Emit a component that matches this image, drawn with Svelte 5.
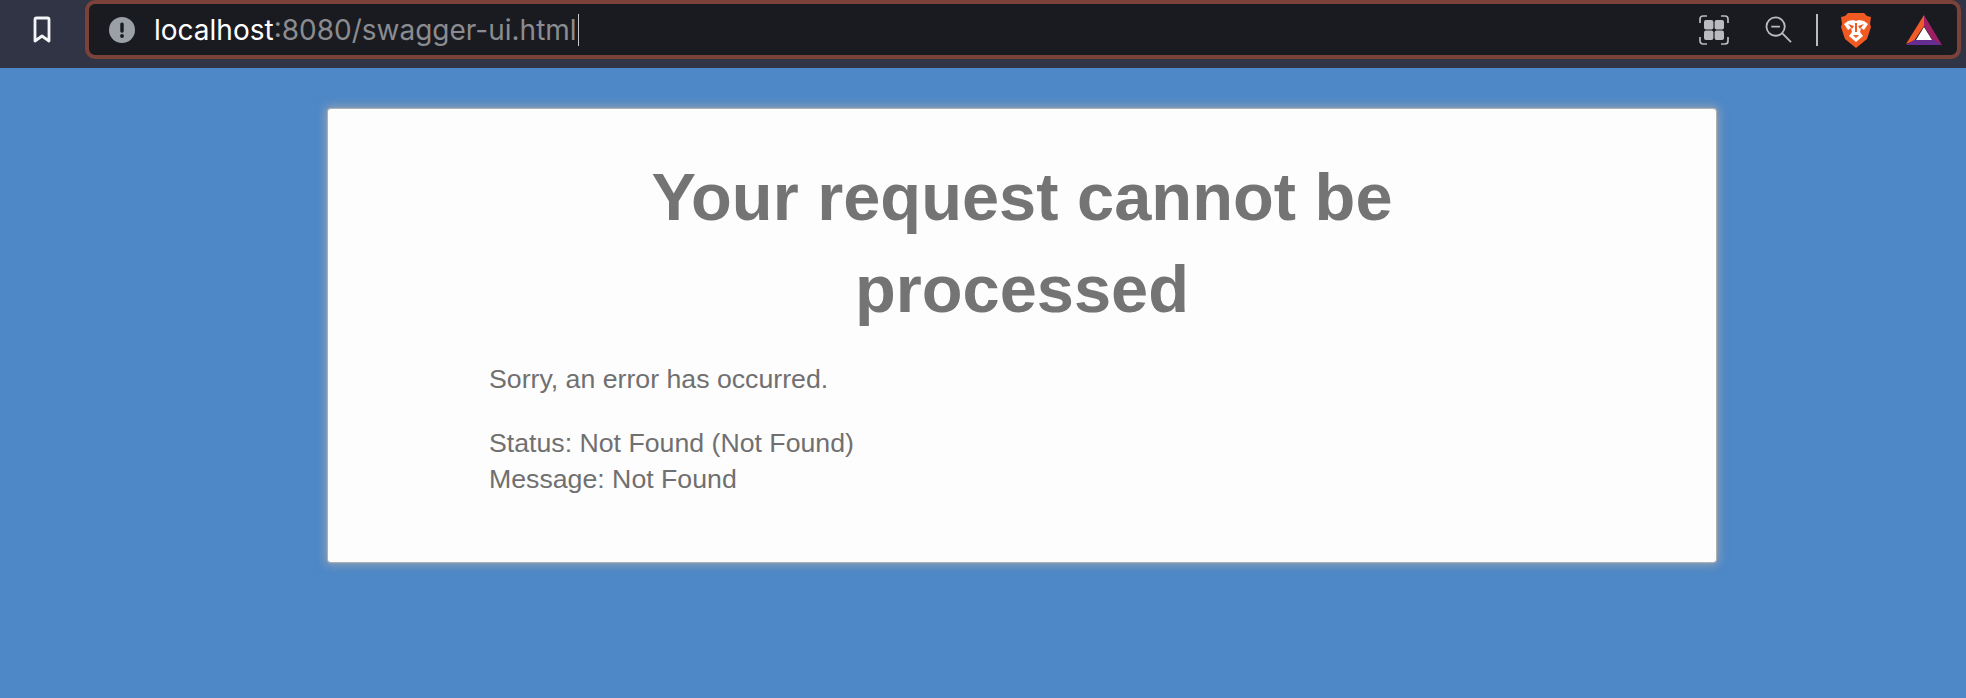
<script>
  const paragraphs = [["Sorry, an error has occurred."], ["Status: Not Found (Not Found)", "Message: Not Found"]];
</script>

<div class="page">
  <header class="toolbar">
    <svg class="bookmark" viewBox="0 0 20 28" aria-hidden="true">
      <path d="M3 3.500 a1.500 1.500 0 0 1 1.500-1.500 h11 a1.500 1.500 0 0 1 1.500 1.500 V25 L10 20 L3 25 Z" fill="none" stroke="#f4f5f6" stroke-width="2.800" stroke-linejoin="round"/>
    </svg>
    <div class="address">
      <svg class="warn" viewBox="0 0 24 24" aria-hidden="true">
        <circle cx="12" cy="12" r="12" fill="#9aa0a6"/>
        <rect x="10.400" y="5" width="3.200" height="9.500" rx="1.500" fill="#1a1b20"/>
        <circle cx="12" cy="17.500" r="1.800" fill="#1a1b20"/>
      </svg>
      <div class="url"><span class="host">localhost</span><span class="rest">:8080/swagger-ui.html</span><span class="caret"></span></div>
      <div class="tools">
        <svg class="qr" viewBox="0 0 30 30" aria-hidden="true">
          <path d="M1 8 V4 a3 3 0 0 1 3-3 h4 M22 1 h4 a3 3 0 0 1 3 3 v4 M29 22 v4 a3 3 0 0 1-3 3 h-4 M8 29 H4 a3 3 0 0 1-3-3 v-4" fill="none" stroke="#b9bbbe" stroke-width="1.700"/>
          <rect x="5" y="5" width="9.400" height="9.400" rx="2" fill="#b9bbbe"/>
          <rect x="15.600" y="5" width="9.400" height="9.400" rx="2" fill="#b9bbbe"/>
          <rect x="5" y="15.600" width="9.400" height="9.400" rx="2" fill="#b9bbbe"/>
          <rect x="15.600" y="15.600" width="9.400" height="9.400" rx="2" fill="#b9bbbe"/>
        </svg>
        <svg class="zoom" viewBox="0 0 28 28" aria-hidden="true">
          <circle cx="11" cy="11" r="9.500" fill="none" stroke="#b9bbbe" stroke-width="1.900"/>
          <path d="M6.500 11 h9 M18 18 L27 27" fill="none" stroke="#b9bbbe" stroke-width="1.900"/>
        </svg>
        <span class="divider"></span>
        <svg class="lion" viewBox="0 0 32 36" aria-hidden="true">
          <path d="M8 1 L24 1 L27 4 L31 5 L30 12 L31 15 L27 27 L16 36 L5 27 L1 15 L2 12 L1 5 L5 4 Z" fill="#f05a22"/>
          <path d="M8 9 L13 8 L16 9 L19 8 L24 9 L28 12 L24 18 L21 16 L20 20 L23 24 L16 30 L9 24 L12 20 L11 16 L8 18 L4 12 Z" fill="#fff"/>
          <path d="M8 12 L14 14 L12 17 Z M24 12 L18 14 L20 17 Z M13 23 h6 L16 26 Z M15 11 h2 v9 h-2 Z" fill="#f05a22"/>
        </svg>
        <svg class="bat" viewBox="0 0 36 32" aria-hidden="true">
          <path d="M18 1 L36 31 L27 27 L18 12 Z" fill="#9e1f63"/>
          <path d="M18 1 L18 12 L8 27 L0 30 Z" fill="#f15a29"/>
          <path d="M0 31 L8 26 H28 L36 31 Z" fill="#662d91"/>
          <path d="M18 13 L26 26 H10 Z" fill="#fff"/>
        </svg>
      </div>
    </div>
  </header>

  <main class="content">
    <section class="card">
      <h1>Your request cannot be processed</h1>
      <div class="body">
        {#each paragraphs as lines}
          <p>{#each lines as line, i}{#if i > 0}<br />{/if}{line}{/each}</p>
        {/each}
      </div>
    </section>
  </main>
</div>

<style>
  :global(body) {
    margin: 0;
    background: #4e88c7;
  }
  .page {
    width: 1966px;
    height: 698px;
    overflow: hidden;
    display: flex;
    flex-direction: column;
    background: #4e88c7;
  }
  .toolbar {
    height: 68px;
    flex: none;
    box-sizing: border-box;
    display: flex;
    align-items: center;
    gap: 33px;
    padding: 0 5px 9px 32px;
    background: #303445;
  }
  .bookmark {
    width: 20px;
    height: 28px;
    flex: none;
  }
  .address {
    flex: 1;
    height: 59px;
    box-sizing: border-box;
    display: flex;
    align-items: center;
    padding: 0 0 0 20px;
    background: #1a1b20;
    border: 4px solid #7a4238;
    border-radius: 10px;
  }
  .warn {
    width: 26px;
    height: 26px;
    flex: none;
  }
  .url {
    margin-left: 19px;
    display: flex;
    align-items: center;
    font: 400 28px "Inter", "Liberation Sans", sans-serif;
  }
  .host { color: #fff; }
  .rest { color: #8b8c90; }
  .caret {
    width: 1px;
    height: 32px;
    background: #c8c8c8;
    margin-left: 1px;
  }
  .tools {
    margin-left: auto;
    display: flex;
    align-items: center;
  }
  .qr { width: 30px; height: 30px; margin-right: 36px; }
  .zoom { width: 27px; height: 27px; margin-right: 24px; }
  .divider { width: 2px; height: 32px; background: #b9bbbe; margin-right: 22px; }
  .lion { width: 32px; height: 36px; margin-right: 34px; }
  .bat { width: 36px; height: 32px; margin-right: 15px; }
  .content {
    flex: 1;
    padding: 41px 0 0 328px;
  }
  .card {
    width: 1388px;
    height: 453px;
    box-sizing: border-box;
    padding: 42px 160px 0;
    background: #fdfdfd;
    border-radius: 3px;
    box-shadow: 0 0 1px 1px #b3b3b3, 0 0 10px 3px rgba(170, 170, 170, 0.7);
    color: #707070;
    font-family: "Liberation Sans", Arial, sans-serif;
  }
  h1 {
    margin: 0 0 26px;
    font-size: 66.800px;
    line-height: 92px;
    font-weight: 700;
    text-align: center;
    color: #747474;
  }
  .body {
    padding-left: 1px;
  }
  p {
    margin: 0 0 28px;
    font-size: 26.700px;
    line-height: 36px;
  }
</style>
